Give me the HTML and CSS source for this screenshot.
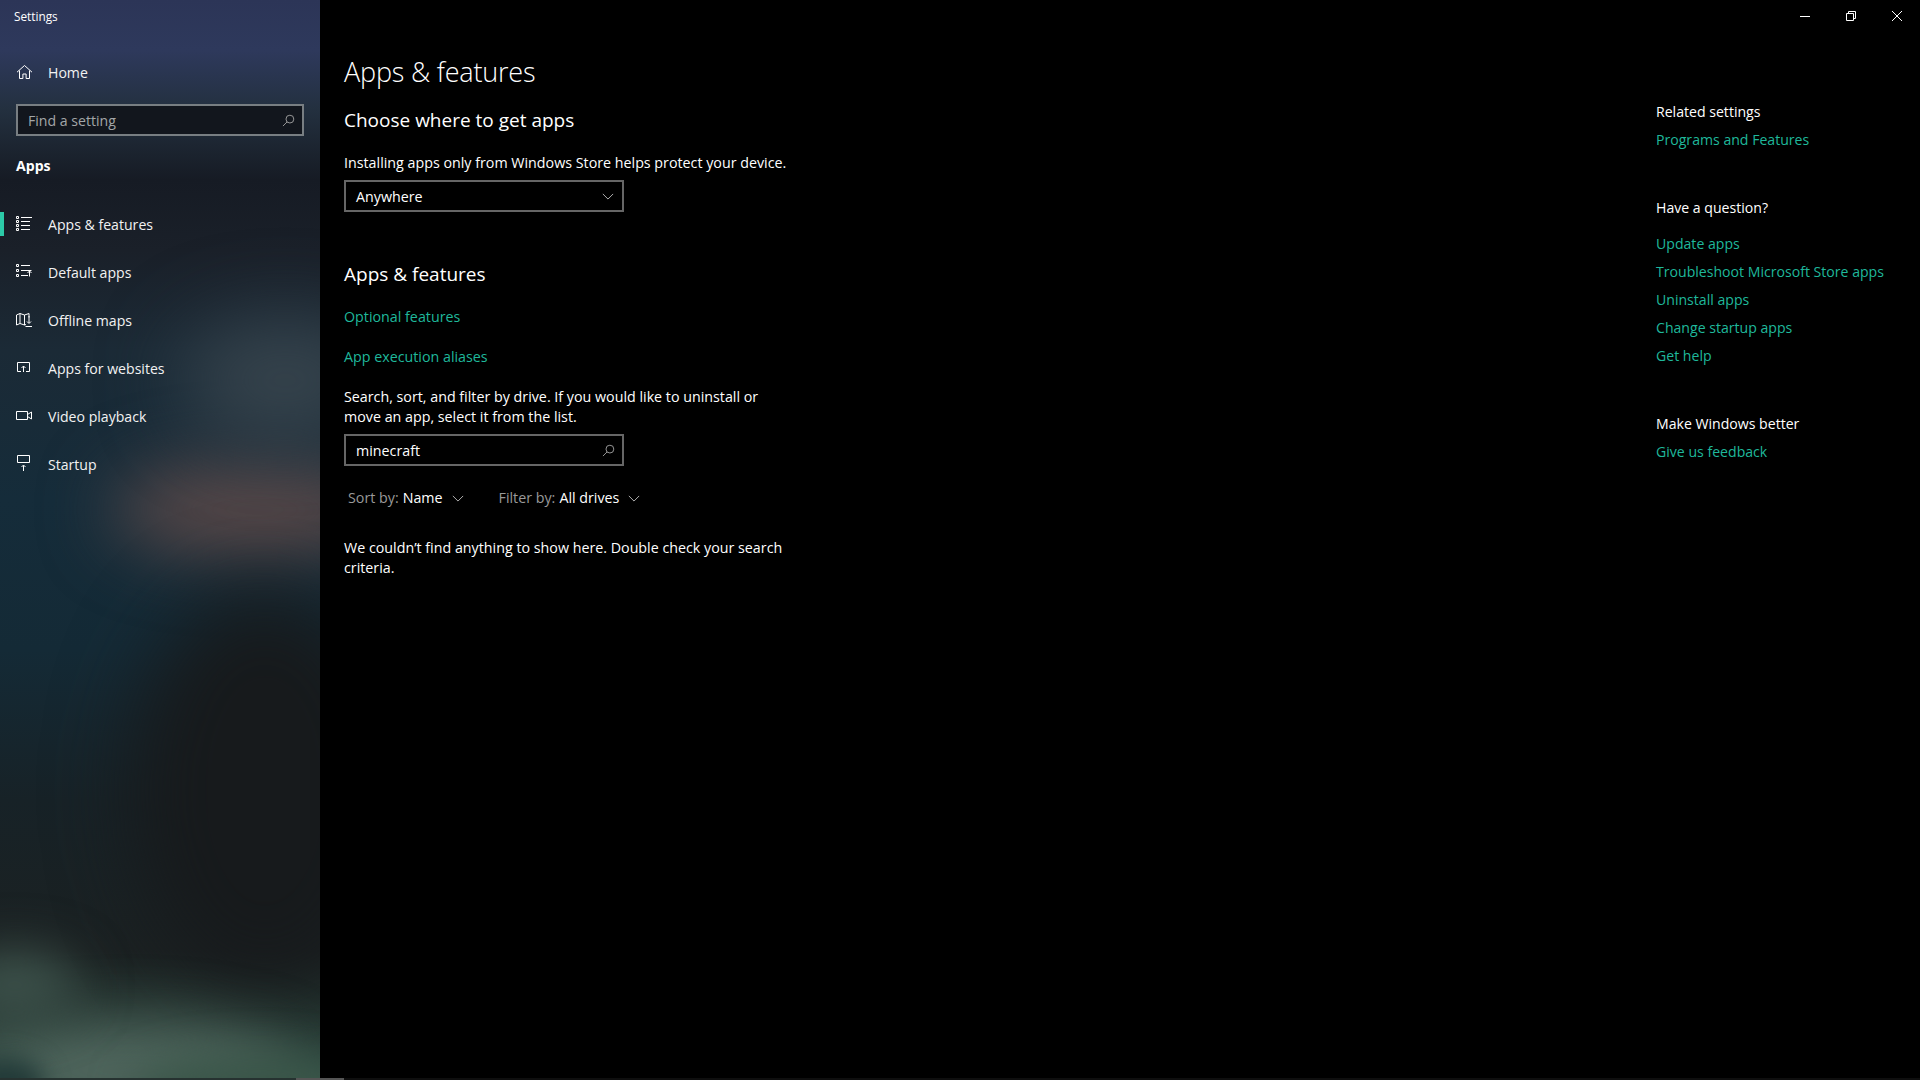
FILE: index.html
```html
<!DOCTYPE html>
<html lang="en">
<head>
<meta charset="utf-8">
<title>Settings</title>
<link rel="stylesheet" href="styles.css">
</head>
<body>
<div class="window">
  <aside class="sidebar">
    <div class="blur b1"></div><div class="blur b2"></div><div class="blur b3"></div><div class="blur b4"></div><div class="blur b5"></div><div class="blur b6"></div><div class="blur b7"></div>
    <div class="side-inner">
      <div class="app-title">Settings</div>
      <div class="nav-row home">
        <svg class="ico" viewBox="0 0 16 16"><path d="M1 8.2 8.5 1.5 16 8.2M3.5 6.5V14.5h3.4v-4.5h3.2v4.5h3.4V6.5"/></svg>
        <span>Home</span>
      </div>
      <div class="side-search">
        <span>Find a setting</span>
        <svg class="search-ico" viewBox="0 0 14 14"><circle cx="8.5" cy="5.5" r="4.2"/><path d="M5.5 8.5 1 13"/></svg>
      </div>
      <div class="group">Apps</div>
      <nav class="nav">
        <div class="nav-row active">
          <svg class="ico" viewBox="0 0 16 16"><path d="M0.5 0.5h2v2h-2zM0.5 4.5h2v2h-2zM0.5 8.5h2v2h-2zM0.5 12.5h2v2h-2zM5 1.5h11M5 5.5h9M5 9.5h9M5 13.5h9"/></svg>
          <span>Apps &amp; features</span>
        </div>
        <div class="nav-row">
          <svg class="ico" viewBox="0 0 16 16"><path d="M0.5 0.5h2v2h-2zM0.5 5.5h2v2h-2zM0.5 10.5h2v2h-2zM5 1.5h9M5 6.5h10.5M5 11.5h7M13.5 12.5V7M11.5 9l2-2 2 2"/></svg>
          <span>Default apps</span>
        </div>
        <div class="nav-row">
          <svg class="ico" viewBox="0 0 16 16"><path d="M4 11.5 .5 13V3L4 1.5 8.5 3 13 1.5v4M4 1.5v10M8.5 3v10L4 11.5M8.5 13l1.5-.5M13 4v7M11 9.5l2 2 2-2M9.5 14.5h6.5"/></svg>
          <span>Offline maps</span>
        </div>
        <div class="nav-row">
          <svg class="ico" viewBox="0 0 16 16"><path d="M5 11.5H1.5v-9h12v9H10M7.5 12V6M5.5 8l2-2 2 2"/></svg>
          <span>Apps for websites</span>
        </div>
        <div class="nav-row">
          <svg class="ico" viewBox="0 0 16 16"><path d="M0.5 3.5h11v8h-11zM11.5 6.5l4-2.5v7l-4-2.5"/></svg>
          <span>Video playback</span>
        </div>
        <div class="nav-row">
          <svg class="ico" viewBox="0 0 16 16"><path d="M1.5 -.5h12v7h-12zM7.5 15V9.5M5.5 11l2-2 2 2"/></svg>
          <span>Startup</span>
        </div>
      </nav>
    </div>
  </aside>
  <main class="content">
    <section class="primary">
      <h1>Apps &amp; features</h1>
      <h2 class="first">Choose where to get apps</h2>
      <p class="lead">Installing apps only from Windows Store helps protect your device.</p>
      <div class="field">
        <span>Anywhere</span>
        <svg class="chev" viewBox="0 0 14 8"><path d="M1 1l6 6 6-6"/></svg>
      </div>
      <h2 class="second">Apps &amp; features</h2>
      <a class="link opt">Optional features</a>
      <a class="link alias">App execution aliases</a>
      <p class="desc">Search, sort, and filter by drive. If you would like to uninstall or<br>move an app, select it from the list.</p>
      <div class="field search">
        <span>minecraft</span>
        <svg class="search-ico" viewBox="0 0 14 14"><circle cx="8.5" cy="5.5" r="4.2"/><path d="M5.5 8.5 1 13"/></svg>
      </div>
      <div class="filters">
        <div class="filter"><span class="muted">Sort by:</span> <span>Name</span><svg class="chev" viewBox="0 0 14 8"><path d="M1 1l6 6 6-6"/></svg></div>
        <div class="filter"><span class="muted">Filter by:</span> <span>All drives</span><svg class="chev" viewBox="0 0 14 8"><path d="M1 1l6 6 6-6"/></svg></div>
      </div>
      <p class="empty">We couldn’t find anything to show here. Double check your search<br>criteria.</p>
    </section>
    <aside class="related">
      <div class="winctl">
        <svg viewBox="0 0 12 12"><path d="M1 6.5h10"/></svg>
        <svg viewBox="0 0 12 12"><path d="M1.5 3.5h7v7h-7zM3.5 3.5v-2h7v7h-2"/></svg>
        <svg viewBox="0 0 12 12"><path d="M1 1l10 10M11 1 1 11"/></svg>
      </div>
      <div class="rel-block b-related">
        <h3>Related settings</h3>
        <a class="link">Programs and Features</a>
      </div>
      <div class="rel-block b-question">
        <h3>Have a question?</h3>
        <a class="link">Update apps</a>
        <a class="link">Troubleshoot Microsoft Store apps</a>
        <a class="link">Uninstall apps</a>
        <a class="link">Change startup apps</a>
        <a class="link">Get help</a>
      </div>
      <div class="rel-block b-better">
        <h3>Make Windows better</h3>
        <a class="link">Give us feedback</a>
      </div>
    </aside>
  </main>
</div>
<div class="scrollbar"><div class="thumb"></div></div>
</body>
</html>
```
FILE: styles.css
```css
* { box-sizing: border-box; }
html, body { margin: 0; height: 100%; background: #000; overflow: hidden; }
body { font-family: "Open Sans", "Noto Sans", sans-serif; font-size: 14.1px; color: #fff; display: flex; flex-direction: column; }
.window { display: flex; height: 1078px; }
.sidebar { width: 320px; flex: none; position: relative; overflow: hidden;
  background: linear-gradient(180deg, #2c3557 0, #2e395c 50px, #23303f 110px, #161b24 180px, #1a2029 250px, #1b2a36 350px, #152c3a 500px, #142a36 650px, #172227 800px, #1b2122 950px, #23332f 1010px, #2c463e 1078px); }
.blur { position: absolute; border-radius: 50%; }
.b1 { left: 110px; top: 462px; width: 290px; height: 95px; background: #5a4949; filter: blur(35px); }
.b2 { left: 180px; top: 320px; width: 210px; height: 120px; background: #37444d; filter: blur(40px); }
.b3 { left: 130px; top: 590px; width: 270px; height: 400px; background: #171a1c; filter: blur(40px); }
.b4 { left: -40px; top: 1025px; width: 340px; height: 90px; background: #52685f; filter: blur(30px); }
.b5 { left: 130px; top: 1055px; width: 260px; height: 70px; background: #3a5649; filter: blur(20px); }
.b6 { left: -50px; top: 950px; width: 130px; height: 70px; background: #3d524b; filter: blur(25px); }
.b7 { left: -35px; top: 1058px; width: 80px; height: 50px; background: #223a38; filter: blur(12px); }
.side-inner { position: relative; display: flex; flex-direction: column; }
.app-title { font-size: 11.8px; line-height: 16px; padding: 8px 0 0 14px; color: #fff; height: 48px; }
.nav-row { height: 48px; display: flex; align-items: center; padding-left: 16px; color: #f2f2f2; position: relative; }
.nav-row span { margin-left: 16px; }
.home { margin-bottom: 8px; }
.ico { width: 16px; height: 16px; fill: none; stroke: #fff; stroke-width: 1; flex: none; overflow: visible; }
.side-search { margin: 0 16px; height: 32px; border: 2px solid #787e82; background: #12161d; display: flex; align-items: center; justify-content: space-between; padding: 0 7px 0 10px; color: #a3a6a8; }
.search-ico { width: 13px; height: 13px; fill: none; stroke: #a0a0a0; stroke-width: 1; flex: none; }
.group { font-weight: 700; padding: 20px 0 0 16px; line-height: 20px; height: 64px; }
.active::before { content: ""; position: absolute; left: 0; top: 12px; width: 4px; height: 24px; background: #2ccaa8; }
.content { flex: 1; display: flex; justify-content: space-between; background: #000; }
.primary { padding: 0 0 0 24px; width: 500px; font-size: 14.28px; }
h1 { font-size: 27px; font-weight: 300; letter-spacing: -0.2px; line-height: 38px; margin: 53px 0 0; }
h2 { font-size: 19px; font-weight: 400; line-height: 28px; margin: 0; }
.first { margin-top: 15px; }
p { margin: 0; line-height: 20px; }
.lead { margin-top: 19px; }
.field { width: 280px; height: 32px; border: 2px solid #666; margin-top: 7px; display: flex; align-items: center; justify-content: space-between; padding: 0 8px 0 10px; }
.field .search-ico { margin-right: -1px; }
.chev { width: 12px; height: 7px; fill: none; stroke: #ccc; stroke-width: 1; flex: none; }
.second { margin-top: 48px; }
.link { display: block; color: #1fb89b; line-height: 20px; }
.opt { margin-top: 19px; }
.alias { margin-top: 20px; }
.desc { margin-top: 20px; }
.filters { display: flex; gap: 35px; margin-top: 22px; padding-left: 4px; line-height: 20px; }
.filter { display: flex; align-items: center; gap: 4px; }
.filter .chev { margin-left: 5px; }
.muted { color: #999; }
.empty { margin-top: 30px; }
.related { width: 264px; flex: none; position: relative; }
.winctl { position: absolute; top: 10px; right: 17px; display: flex; gap: 34px; }
.winctl svg { width: 12px; height: 12px; fill: none; stroke: #fff; stroke-width: 1; }
.rel-block { display: flex; flex-direction: column; }
.rel-block .link + .link { margin-top: 8px; }
.b-related { padding-top: 102px; }
.b-question { padding-top: 48px; }
.b-question h3 { margin-bottom: 16px; }
.b-better { padding-top: 48px; }
h3 { font-size: 14.1px; font-weight: 400; line-height: 20px; margin: 0 0 8px; }
.scrollbar { height: 2px; background: #0e0e0e; position: relative; flex: none; }
.scrollbar::before { content: ""; position: absolute; left: 0; width: 296px; height: 2px; background: #263230; }
.thumb { position: absolute; left: 296px; width: 48px; height: 2px; background: #555; }
```
